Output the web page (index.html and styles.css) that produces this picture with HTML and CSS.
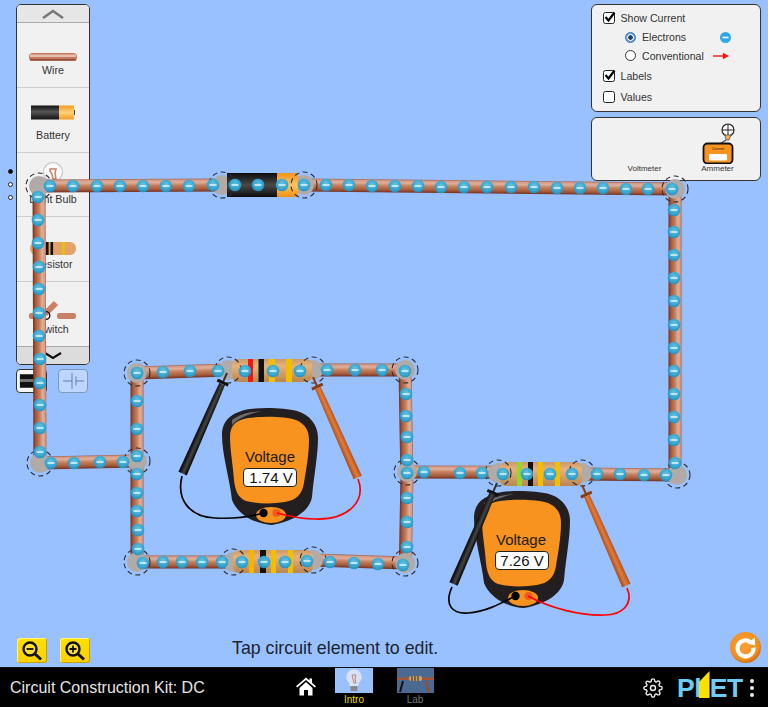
FILE: index.html
```html
<!DOCTYPE html>
<html lang="en">
<head>
<meta charset="utf-8">
<title>Circuit Construction Kit: DC</title>
<link rel="stylesheet" href="styles.css">
</head>
<body>
<div class="app">
  <main class="sim">
    <div class="sim-top">
      <div class="left">
        <div class="pager"><span class="dot on"></span><span class="dot"></span><span class="dot"></span></div>
        <section class="toolbox">
          <div class="cap cap-top"><svg width="24" height="10" viewBox="0 0 24 10"><path class="chev-up" d="M2 9 L12 2 L22 9"/></svg></div>
          <div class="tool">
            <svg class="t-wire" width="48" height="8" viewBox="0 0 48 8"><rect width="48" height="8" rx="3.5" fill="#c47a60"/><rect x="1" y="1.500" width="46" height="2.500" fill="#e8bfae"/><rect x="1" y="6" width="46" height="1.500" fill="#94503c"/></svg>
            <span>Wire</span>
          </div>
          <div class="tool">
            <svg class="t-batt" width="44" height="15" viewBox="0 0 44 15"><defs><linearGradient id="tb" x1="0" y1="0" x2="0" y2="1"><stop offset="0" stop-color="#111"/><stop offset=".45" stop-color="#555"/><stop offset="1" stop-color="#111"/></linearGradient><linearGradient id="to" x1="0" y1="0" x2="0" y2="1"><stop offset="0" stop-color="#f79a1e"/><stop offset=".5" stop-color="#ffd27a"/><stop offset="1" stop-color="#f49a22"/></linearGradient></defs><rect width="28" height="14" y=".5" fill="url(#tb)"/><rect x="28" y=".5" width="15" height="14" fill="url(#to)"/><rect x="43" y="5" width="1" height="5" fill="#444"/></svg>
            <span>Battery</span>
          </div>
          <div class="tool">
            <svg class="t-bulb" width="24" height="30" viewBox="0 0 24 30"><circle cx="12" cy="10" r="9.5" fill="#fafafa" stroke="#c8c8c8" stroke-width="1.2"/><path d="M9 7 h6 l-1 4 l1 6 h-3 l-1 -5 l-2 -3z" fill="none" stroke="#c9816a" stroke-width="1.5"/><rect x="7" y="19" width="10" height="9" fill="#bbb"/></svg>
            <span>Light Bulb</span>
          </div>
          <div class="tool">
            <svg class="t-res" width="46" height="13" viewBox="0 0 46 13"><rect width="46" height="13" rx="6" fill="#e2a466"/><rect x="16" width="2.6" height="13" fill="#111"/><rect x="20.5" width="2.6" height="13" fill="#111"/><rect x="32" width="2.6" height="13" fill="#f0c000"/></svg>
            <span>Resistor</span>
          </div>
          <div class="tool">
            <svg class="t-sw" width="48" height="21" viewBox="0 0 48 21"><rect y="13" width="14" height="6" rx="2" fill="#c98068"/><path d="M16 14 L27 3" stroke="#c98068" stroke-width="6"/><circle cx="17" cy="15.5" r="3.8" fill="none" stroke="#111" stroke-width="1.3"/><rect x="28" y="13" width="19" height="6" rx="2.5" fill="#c98068"/></svg>
            <span>Switch</span>
          </div>
          <div class="cap cap-bottom"><svg width="18" height="9" viewBox="0 0 18 9"><path class="chev-down" d="M1 2 L9 7 L17 2"/></svg></div>
        </section>
        <div class="modes">
          <div class="mode mode-life"><svg width="30" height="22" viewBox="0 0 30 22"><rect x="3" y="4" width="26" height="14" fill="#111"/><rect x="3" y="9" width="26" height="3" fill="#777"/></svg></div>
          <div class="mode mode-schem"><svg width="28" height="22" viewBox="0 0 28 22"><path class="schem" d="M4 11 H13 M13 3 V19 M17 6.500 V15.500 M17 11 H25"/></svg></div>
        </div>
      </div>
      <aside class="right">
        <section class="panel panel-opts">
          <label class="row"><span class="check"><svg width="13" height="13" viewBox="0 0 13 13"><path class="tick" d="M2.500 6 L5.500 9.500 L11.500 1.500"/></svg></span>Show Current</label>
          <div class="row sub r2"><span class="radio on"></span>Electrons<svg class="key" width="11" height="11" viewBox="0 0 11 11"><circle cx="5.500" cy="5.500" r="5.500" fill="#2ea9e6"/><rect x="2.500" y="4.700" width="6" height="1.600" fill="#fff"/></svg></div>
          <div class="row sub r3"><span class="radio"></span>Conventional<svg class="key key-arrow" width="16" height="8" viewBox="0 0 16 8"><path d="M0 4 H10" stroke="#f11" stroke-width="1.400"/><path d="M10 .8 L16 4 L10 7.200z" fill="#f11"/></svg></div>
          <label class="row r4"><span class="check"><svg width="13" height="13" viewBox="0 0 13 13"><path class="tick" d="M2.500 6 L5.500 9.500 L11.500 1.500"/></svg></span>Labels</label>
          <label class="row r5"><span class="check"></span>Values</label>
        </section>
        <section class="panel panel-meters">
          <div class="meter-item">Voltmeter</div>
          <div class="meter-item">
            <svg width="50" height="41" viewBox="0 0 50 41"><circle cx="35" cy="7" r="6" fill="#fff" stroke="#222" stroke-width="1.200"/><path d="M35 1 V13 M29 7 H41" stroke="#222" stroke-width="1"/><path d="M32 12 L38 12 L36 17 L33 17z" fill="#f4ae55" stroke="#333" stroke-width=".6"/><path d="M33 17 L27 21" stroke="#555" stroke-width="1.500"/><rect x="10.500" y="20.500" width="29" height="20" rx="4" fill="#f7931e" stroke="#111" stroke-width="1.800"/><text class="amm-t" x="25" y="27">Current</text><rect x="16" y="31" width="18" height="6.500" rx="1" fill="#fff"/></svg>
            Ammeter
          </div>
        </section>
      </aside>
    </div>
    <div class="sim-bottom">
      <button class="zoom-btn"><svg width="28" height="23" viewBox="0 0 28 23"><circle cx="12" cy="10" r="6.500" class="lens"/><path class="lens-h" d="M17 15 L23 20.500"/><path class="lens-m" d="M8.500 10 H15.500"/></svg></button>
      <button class="zoom-btn"><svg width="28" height="23" viewBox="0 0 28 23"><circle cx="12" cy="10" r="6.500" class="lens"/><path class="lens-h" d="M17 15 L23 20.500"/><path class="lens-m" d="M8.500 10 H15.500 M12 6.500 V13.500"/></svg></button>
      <p class="status">Tap circuit element to edit.</p>
      <div class="reset"><svg width="31" height="31" viewBox="0 0 31 31"><defs><radialGradient id="rg" cx=".45" cy=".4" r=".6"><stop offset="0" stop-color="#fba136"/><stop offset=".8" stop-color="#f58d1e"/><stop offset="1" stop-color="#c96f12"/></radialGradient></defs><circle cx="15.500" cy="15.500" r="15.500" fill="url(#rg)"/><path d="M21 10.500 A8 8 0 1 0 23.500 15.500" fill="none" stroke="#fff" stroke-width="4"/><path d="M17.500 11.500 L25 13.500 L25 5.500z" fill="#fff"/></svg></div>
    </div>

    <svg class="circuit" width="768" height="667" viewBox="0 0 768 667">
      <defs>
        <linearGradient id="copper" x1="0" y1="0" x2="0" y2="1">
          <stop offset="0" stop-color="#a06050"/><stop offset=".1" stop-color="#d59c88"/><stop offset=".28" stop-color="#e0ae98"/><stop offset=".5" stop-color="#c67f5c"/><stop offset=".8" stop-color="#a55b3b"/><stop offset="1" stop-color="#723024"/>
        </linearGradient>
        <linearGradient id="tan" x1="0" y1="0" x2="0" y2="1">
          <stop offset="0" stop-color="#c99a6a"/><stop offset=".3" stop-color="#e8b27a"/><stop offset="1" stop-color="#b98752"/>
        </linearGradient>
        <linearGradient id="bk" x1="0" y1="0" x2="0" y2="1">
          <stop offset="0" stop-color="#0c0c0c"/><stop offset=".5" stop-color="#4a4a4a"/><stop offset="1" stop-color="#0c0c0c"/>
        </linearGradient>
        <linearGradient id="og" x1="0" y1="0" x2="0" y2="1">
          <stop offset="0" stop-color="#f49317"/><stop offset=".5" stop-color="#ffc561"/><stop offset="1" stop-color="#f09014"/>
        </linearGradient>
        <linearGradient id="pb" x1="0" y1="0" x2="0" y2="1">
          <stop offset="0" stop-color="#000"/><stop offset=".45" stop-color="#444"/><stop offset="1" stop-color="#000"/>
        </linearGradient>
        <linearGradient id="pr" x1="0" y1="0" x2="0" y2="1">
          <stop offset="0" stop-color="#b0501c"/><stop offset=".5" stop-color="#e07c3a"/><stop offset="1" stop-color="#a84a18"/>
        </linearGradient>
        <radialGradient id="el" cx=".5" cy=".4" r=".6">
          <stop offset="0" stop-color="#64c4e4"/><stop offset=".7" stop-color="#2fa6d4"/><stop offset="1" stop-color="#1e8fc0"/>
        </radialGradient>
        <g id="e"><circle r="6.300" fill="url(#el)" opacity=".95"/><rect x="-3.500" y="-.8" width="7" height="1.600" fill="#d8f2fb"/></g>
        <g id="probe-b"><rect y="-1" width="11" height="2" fill="#333"/><rect x="9" y="-6" width="3" height="12" fill="#111"/><path d="M12 -3 L30 -3.500 L110 -4.500 V4.500 L30 3.500 L12 3z" fill="url(#pb)"/></g>
        <g id="probe-r"><rect y="-1" width="11" height="2" fill="#8a3d12"/><rect x="9" y="-6" width="3" height="12" fill="#8a3d12"/><path d="M12 -3 L30 -3.500 L110 -4.500 V4.500 L30 3.500 L12 3z" fill="url(#pr)"/></g>
        <g id="meter">
          <path d="M222 435 C222 420 232 412 250 409 C265 407 285 408 297 411 C310 415 318 425 318 438 C318 455 314 475 312 497 C310 510 295 521 272 525 C255 524 238 515 232 500 C230 480 222 455 222 435Z" fill="#231f20"/>
          <path d="M232 420 C240 414 250 412 262 411 C250 414 240 417 232 425Z" fill="#6b6b6b"/>
          <path d="M230 437 C230 425 236 420 248 418 C262 416 285 416 296 420 C305 424 309 430 309 440 C309 455 306 470 304 483 C302 495 296 500 285 502 C272 504 258 504 246 501 C238 498 235 490 234 480 C233 465 230 450 230 437Z" fill="#f7931e"/>
          <ellipse cx="271" cy="515" rx="15" ry="8" fill="#f7931e"/>
          <circle cx="263.500" cy="513" r="4.200" fill="#000"/>
          <circle cx="276.500" cy="513" r="4" fill="#f15a22"/>
          <rect x="243.500" y="468.500" width="53" height="18" rx="3.500" fill="#fff" stroke="#222" stroke-width="1"/>
        </g>
      </defs>

      <g fill="url(#copper)">
        <rect transform="translate(39 186) rotate(-.3)" y="-6.500" width="183" height="13"/>
        <rect transform="translate(304 185) rotate(.62)" y="-6.500" width="371" height="13"/>
        <rect transform="translate(675 189) rotate(90)" y="-6.500" width="286" height="13"/>
        <rect transform="translate(582 474) rotate(.6)" y="-6.500" width="95" height="13"/>
        <rect transform="translate(407 472) rotate(.1)" y="-6.500" width="91" height="13"/>
        <rect transform="translate(405 370) rotate(89)" y="-6.500" width="102" height="13"/>
        <rect transform="translate(407 472) rotate(91)" y="-6.500" width="91" height="13"/>
        <rect transform="translate(313 370)" y="-6.500" width="92" height="13"/>
        <rect transform="translate(137 373) rotate(-1.900)" y="-6.500" width="91" height="13"/>
        <rect transform="translate(137 373) rotate(90)" y="-6.500" width="88" height="13"/>
        <rect transform="translate(137 461) rotate(90)" y="-6.500" width="101" height="13"/>
        <rect transform="translate(137 562)" y="-6.500" width="96" height="13"/>
        <rect transform="translate(313 560) rotate(1.900)" y="-6.500" width="92" height="13"/>
        <rect transform="translate(40 463) rotate(-1.200)" y="-6.500" width="97" height="13"/>
        <rect transform="translate(39 186) rotate(89.800)" y="-6.500" width="277" height="13"/>
      </g>

      <!-- vertices -->
      <g class="nodes">
        <circle cx="39" cy="186" r="10"/><circle cx="222" cy="185" r="10"/><circle cx="304" cy="185" r="10"/><circle cx="675" cy="189" r="10"/>
        <circle cx="677" cy="475" r="10"/><circle cx="582" cy="473" r="10"/><circle cx="498" cy="473" r="10"/><circle cx="407" cy="472" r="10"/>
        <circle cx="405" cy="370" r="10"/><circle cx="313" cy="370" r="10"/><circle cx="228" cy="370" r="10"/><circle cx="137" cy="373" r="10"/>
        <circle cx="137" cy="461" r="10"/><circle cx="40" cy="463" r="10"/><circle cx="137" cy="562" r="10"/><circle cx="233" cy="562" r="10"/>
        <circle cx="313" cy="560" r="10"/><circle cx="405" cy="563" r="10"/>
      </g>

      <!-- battery -->
      <rect x="227" y="173" width="50" height="24" fill="url(#bk)"/>
      <rect x="277" y="173" width="21" height="24" fill="url(#og)"/>

      <!-- resistors -->
      <g>
        <rect x="232" y="359" width="80" height="23" rx="6" fill="url(#tan)"/>
        <rect x="248" y="359" width="5" height="23" fill="#f01616"/><rect x="258.500" y="359" width="5.500" height="23" fill="#111"/><rect x="269" y="359" width="6" height="23" fill="#f0c000"/><rect x="286" y="359" width="6" height="23" fill="#f0c000"/>
        <rect x="233" y="550" width="80" height="23" rx="6" fill="url(#tan)"/>
        <rect x="249" y="550" width="5" height="23" fill="#f6b400"/><rect x="260" y="550" width="6" height="23" fill="#111"/><rect x="271" y="550" width="5" height="23" fill="#f0c000"/><rect x="288" y="550" width="5" height="23" fill="#f0c000"/>
        <rect x="500" y="462" width="82" height="24" rx="6" fill="url(#tan)"/>
        <rect x="517" y="462" width="5" height="24" fill="#94d82a"/><rect x="528" y="462" width="5" height="24" fill="#111"/><rect x="538" y="462" width="5" height="24" fill="#f0c000"/><rect x="555" y="462" width="5" height="24" fill="#f0c000"/>
      </g>

      <g class="rings">
        <circle cx="39" cy="186" r="13"/><circle cx="222" cy="185" r="13"/><circle cx="304" cy="185" r="13"/><circle cx="675" cy="189" r="13"/>
        <circle cx="677" cy="475" r="13"/><circle cx="582" cy="473" r="13"/><circle cx="498" cy="473" r="13"/><circle cx="407" cy="472" r="13"/>
        <circle cx="405" cy="370" r="13"/><circle cx="313" cy="370" r="13"/><circle cx="228" cy="370" r="13"/><circle cx="137" cy="373" r="13"/>
        <circle cx="137" cy="461" r="13"/><circle cx="40" cy="463" r="13"/><circle cx="137" cy="562" r="13"/><circle cx="233" cy="562" r="13"/>
        <circle cx="313" cy="560" r="13"/><circle cx="405" cy="563" r="13"/>
      </g>

      <!-- electrons -->
      <g>
        <use href="#e" x="50" y="186"/><use href="#e" x="73" y="186"/><use href="#e" x="97" y="186"/><use href="#e" x="120" y="186"/><use href="#e" x="143" y="186"/><use href="#e" x="166" y="186"/><use href="#e" x="189" y="186"/><use href="#e" x="213" y="185"/><use href="#e" x="235" y="185"/><use href="#e" x="258" y="185"/><use href="#e" x="282" y="185"/><use href="#e" x="304" y="185"/><use href="#e" x="326" y="185"/><use href="#e" x="349" y="185"/><use href="#e" x="372" y="186"/><use href="#e" x="395" y="186"/><use href="#e" x="418" y="186"/><use href="#e" x="441" y="187"/><use href="#e" x="464" y="187"/><use href="#e" x="487" y="187"/><use href="#e" x="511" y="187"/><use href="#e" x="534" y="187"/><use href="#e" x="557" y="188"/><use href="#e" x="580" y="188"/><use href="#e" x="603" y="188"/><use href="#e" x="626" y="189"/><use href="#e" x="648" y="189"/><use href="#e" x="672" y="189"/>

        <use href="#e" x="674" y="210"/><use href="#e" x="674" y="232"/><use href="#e" x="674" y="255"/><use href="#e" x="674" y="278"/><use href="#e" x="674" y="301"/><use href="#e" x="674" y="325"/><use href="#e" x="674" y="348"/><use href="#e" x="674" y="371"/><use href="#e" x="674" y="394"/><use href="#e" x="674" y="417"/><use href="#e" x="674" y="440"/><use href="#e" x="675" y="463"/>

        <use href="#e" x="38" y="197"/><use href="#e" x="38" y="220"/><use href="#e" x="38" y="243"/><use href="#e" x="39" y="267"/><use href="#e" x="39" y="289"/><use href="#e" x="39" y="313"/><use href="#e" x="39" y="336"/><use href="#e" x="40" y="359"/><use href="#e" x="40" y="383"/><use href="#e" x="40" y="405"/><use href="#e" x="40" y="428"/><use href="#e" x="40" y="452"/>
        <use href="#e" x="51" y="463"/><use href="#e" x="74" y="463"/><use href="#e" x="100" y="462"/><use href="#e" x="123" y="462"/>

        <use href="#e" x="137" y="373"/><use href="#e" x="163" y="372"/><use href="#e" x="190" y="371"/><use href="#e" x="218" y="371"/><use href="#e" x="245" y="371"/><use href="#e" x="273" y="371"/><use href="#e" x="300" y="371"/><use href="#e" x="327" y="370"/><use href="#e" x="355" y="370"/><use href="#e" x="382" y="370"/><use href="#e" x="405" y="371"/>
        <use href="#e" x="406" y="394"/><use href="#e" x="406" y="416"/><use href="#e" x="407" y="437"/><use href="#e" x="407" y="460"/><use href="#e" x="407" y="473"/><use href="#e" x="407" y="498"/><use href="#e" x="407" y="522"/><use href="#e" x="407" y="547"/><use href="#e" x="403" y="565"/>
        <use href="#e" x="378" y="564"/><use href="#e" x="354" y="563"/><use href="#e" x="330" y="562"/><use href="#e" x="307" y="561"/><use href="#e" x="285" y="562"/><use href="#e" x="264" y="562"/><use href="#e" x="242" y="562"/><use href="#e" x="222" y="562"/><use href="#e" x="202" y="562"/><use href="#e" x="182" y="562"/><use href="#e" x="163" y="562"/><use href="#e" x="143" y="563"/>
        <use href="#e" x="138" y="549"/><use href="#e" x="138" y="530"/><use href="#e" x="137" y="511"/><use href="#e" x="137" y="493"/><use href="#e" x="137" y="474"/><use href="#e" x="137" y="456"/><use href="#e" x="137" y="429"/><use href="#e" x="137" y="401"/>

        <use href="#e" x="424" y="472"/><use href="#e" x="460" y="473"/><use href="#e" x="482" y="473"/><use href="#e" x="503" y="474"/><use href="#e" x="527" y="474"/><use href="#e" x="550" y="474"/><use href="#e" x="572" y="474"/><use href="#e" x="597" y="474"/><use href="#e" x="620" y="474"/><use href="#e" x="644" y="475"/><use href="#e" x="666" y="475"/>
      </g>

      <!-- voltmeter 1 -->
      <use href="#meter"/>
      <text class="v-label" x="270" y="462">Voltage</text>
      <text class="v-read" x="271" y="483">1.74 V</text>
      <path class="lead-k" d="M182 476 C176 500 190 517 215 518 C235 519 250 517 263 513"/>
      <path class="lead-r" d="M358 479 C366 500 350 520 315 519 C300 519 288 516 277 513"/>
      <use href="#probe-b" transform="translate(227 373) rotate(113.800)"/>
      <use href="#probe-r" transform="translate(313 377) rotate(66)"/>

      <!-- voltmeter 2 -->
      <use href="#meter" transform="translate(252 83)"/>
      <text class="v-label" x="521" y="545">Voltage</text>
      <text class="v-read" x="522" y="566">7.26 V</text>
      <path class="lead-k" d="M452 587 C444 605 452 614 468 613 C485 612 500 604 515 596"/>
      <path class="lead-r" d="M627 588 C634 604 622 615 605 615 C580 616 550 608 528 596"/>
      <use href="#probe-b" transform="translate(497 483) rotate(113.300)"/>
      <use href="#probe-r" transform="translate(582 485) rotate(66.200)"/>
    </svg>
  </main>

  <nav class="nav">
    <div class="nav-title">Circuit Construction Kit: DC</div>
    <svg class="home" width="20" height="19" viewBox="0 0 20 19"><path d="M10 .5 L13.500 3.500 V1.500 H16 V5.700 L20 9.200 L18.800 10.500 L10 3 L1.200 10.500 L0 9.200z" fill="#fff"/><path d="M3.500 11 L10 5 L16.500 11 V18.500 H12 V13 H8 V18.500 H3.500z" fill="#fff"/></svg>
    <div class="tab tab-intro">
      <div class="thumb thumb-intro"><svg width="38" height="25" viewBox="0 0 38 25"><path d="M19 2 A7 7 0 0 1 23.500 14.500 L22.500 18 H15.500 L14.500 14.500 A7 7 0 0 1 19 2z" fill="#d3e3ff" stroke="#e9e9e9" stroke-width="1"/><path d="M17 7 h4 l-1 4 l1 4 h-2 l-1 -4z" fill="none" stroke="#c9816a" stroke-width="1"/><rect x="15.500" y="18" width="7" height="5" fill="#888"/></svg></div>
      <span>Intro</span>
    </div>
    <div class="tab tab-lab">
      <div class="thumb thumb-lab"><svg width="37" height="25" viewBox="0 0 37 25"><rect y="9.500" width="37" height="2.500" fill="#a8553a"/><rect x="12" y="8" width="13" height="5" rx="2" fill="#c9a46a"/><path d="M15 8 V13 M18 8 V13 M21 8 V13" stroke="#222" stroke-width="1"/><path d="M6 13 L3 24" stroke="#111" stroke-width="2"/><path d="M29 13 L32 24" stroke="#9c4a25" stroke-width="2"/></svg></div>
      <span>Lab</span>
    </div>
    <svg class="gear" width="20" height="20" viewBox="0 0 24 24"><circle cx="12" cy="12" r="3"/><path d="M19.400 15a1.650 1.650 0 0 0 .33 1.820l.06.06a2 2 0 0 1 0 2.830 2 2 0 0 1-2.830 0l-.06-.06a1.650 1.650 0 0 0-1.820-.33 1.650 1.650 0 0 0-1 1.510V21a2 2 0 0 1-2 2 2 2 0 0 1-2-2v-.09A1.650 1.650 0 0 0 9 19.400a1.650 1.650 0 0 0-1.820.33l-.06.06a2 2 0 0 1-2.830 0 2 2 0 0 1 0-2.830l.06-.06a1.650 1.650 0 0 0 .33-1.820 1.650 1.650 0 0 0-1.510-1H3a2 2 0 0 1-2-2 2 2 0 0 1 2-2h.09A1.650 1.650 0 0 0 4.600 9a1.650 1.650 0 0 0-.33-1.820l-.06-.06a2 2 0 0 1 0-2.830 2 2 0 0 1 2.830 0l.06.06a1.650 1.650 0 0 0 1.820.33H9a1.650 1.650 0 0 0 1-1.510V3a2 2 0 0 1 2-2 2 2 0 0 1 2 2v.09a1.650 1.650 0 0 0 1 1.510 1.650 1.650 0 0 0 1.820-.33l.06-.06a2 2 0 0 1 2.830 0 2 2 0 0 1 0 2.830l-.06.06a1.650 1.650 0 0 0-.33 1.820V9a1.650 1.650 0 0 0 1.510 1H21a2 2 0 0 1 2 2 2 2 0 0 1-2 2h-.09a1.650 1.650 0 0 0-1.510 1z"/></svg>
    <div class="logo">PhET<svg class="flame" width="11" height="27" viewBox="0 0 11 27"><path d="M0 27 V11 L10.500 0 V27z" fill="#ffe000"/></svg></div>
    <div class="kebab"><i></i><i></i><i></i></div>
  </nav>
</div>
</body>
</html>
```

FILE: styles.css
```css
* { box-sizing: border-box; }
html, body { margin: 0; padding: 0; overflow: hidden; }
body { font-family: "Liberation Sans", Arial, sans-serif; color: #333; }

.app { width: 768px; height: 707px; display: flex; flex-direction: column; }

.sim {
  position: relative;
  flex: 1;
  background: #99c1ff;
  padding: 4px 7px 4px 7px;
  display: flex;
  flex-direction: column;
}
.sim-top { display: flex; justify-content: space-between; align-items: flex-start; }

.left { display: grid; grid-template-columns: 6px 74px; column-gap: 3px; row-gap: 4px; }
.pager { grid-column: 1; grid-row: 1; align-self: center; display: flex; flex-direction: column; gap: 8px; }
.dot { width: 5px; height: 5px; margin-left: .5px; border-radius: 50%; background: #fff; border: 1px solid #222; }
.dot.on { background: #000; }

.toolbox {
  grid-column: 2; grid-row: 1;
  height: 361px;
  background: #f1f1f1;
  border: 1.5px solid #333;
  border-radius: 5px;
  display: flex;
  flex-direction: column;
  overflow: hidden;
}
.cap { display: flex; align-items: center; justify-content: center; background: #e6e6e6; }
.cap-top { height: 18px; border-bottom: 1px solid #aaa; }
.cap-bottom { height: 18px; background: #dcdcdc; border-top: 1px solid #aaa; }
.chev-up { fill: none; stroke: #777; stroke-width: 2.5; }
.chev-down { fill: none; stroke: #111; stroke-width: 2.2; }
.tool {
  flex: 1;
  display: flex;
  flex-direction: column;
  align-items: center;
  justify-content: flex-end;
  padding-bottom: 10px;
  border-bottom: 1px solid #ccc;
  font-size: 10.7px;
  line-height: 14px;
  color: #333;
}
.tool:nth-last-child(2) { border-bottom: 0; }
.t-wire { margin-bottom: 2px; }
.t-batt { margin-bottom: 8px; }
.t-bulb { margin-bottom: 0; }
.t-res { margin-bottom: 2px; }
.t-sw { margin-bottom: 1px; }

.modes { grid-column: 2; grid-row: 2; display: flex; gap: 11px; }
.mode { width: 31px; height: 24px; border-radius: 4px; display: flex; align-items: center; justify-content: center; }
.mode-life { background: #f6f6f6; border: 1.5px solid #333; }
.mode-schem { background: #bcd6ff; border: 1.5px solid #7f97bd; width: 30px; }
.schem { fill: none; stroke: #6b7f9e; stroke-width: 1; }

.right { width: 170px; display: flex; flex-direction: column; gap: 5px; }
.panel { background: #f1f1f1; border: 1.5px solid #333; border-radius: 6px; }
.panel-opts { height: 108px; padding: 5.5px 29px 0 10.5px; font-size: 10.6px; color: #333; }
.row { display: flex; align-items: center; height: 14px; line-height: 14px; }
.sub { padding-left: 22.5px; }
.r2 { margin-top: 5.5px; }
.r3 { margin-top: 4.5px; }
.r4 { margin-top: 6px; }
.r5 { margin-top: 7.5px; }
.check { width: 12px; height: 12px; margin-right: 6px; background: #fff; border: 1.3px solid #222; border-radius: 2.5px; position: relative; flex: none; }
.check svg { position: absolute; left: -1px; top: -2px; }
.tick { fill: none; stroke: #000; stroke-width: 2.2; }
.radio { width: 11px; height: 11px; margin-right: 6px; flex: none; border-radius: 50%; background: #fff; border: 1.2px solid #333; }
.radio.on { background: radial-gradient(circle, #1c3d66 0 2px, #fff 2.5px 3px, #6aa6ea 3.5px); border-color: #3b6fb0; }
.key { margin-left: auto; flex: none; }
.key-arrow { margin-right: 2.5px; }

.panel-meters { height: 64px; display: flex; align-items: flex-end; gap: 23px; padding: 0 0 7px 27.5px; font-size: 8px; color: #333; }
.meter-item { width: 50px; text-align: center; line-height: 9px; }
.meter-item svg { display: block; }
.amm-t { font-size: 3.6px; text-anchor: middle; fill: #222; }

.sim-bottom { margin-top: auto; height: 31px; display: flex; align-items: flex-end; padding-left: 10px; }
.zoom-btn {
  width: 30px; height: 25px; padding: 0;
  display: flex; align-items: center; justify-content: center;
  border: 0; border-radius: 3px;
  background: linear-gradient(#ffe100, #ffd000);
  box-shadow: inset -1px -1px 0 #c9a200, inset 1px 1px 0 #fff27a;
}
.zoom-btn + .zoom-btn { margin-left: 13px; }
.lens { fill: #fff3; stroke: #111; stroke-width: 2.4; }
.lens-h { fill: none; stroke: #111; stroke-width: 3; }
.lens-m { fill: none; stroke: #111; stroke-width: 1.8; }
.status { margin: 0 0 5px 142px; font-size: 17.75px; line-height: 20px; color: #1c2430; white-space: nowrap; }
.reset { margin-left: auto; width: 31px; height: 31px; }
.reset svg { display: block; }

.circuit { position: absolute; left: 0; top: 0; pointer-events: none; }
.nodes circle { fill: #b2aaa6; }
.rings circle { fill: none; stroke: #2b2b33; stroke-width: 1.1; stroke-dasharray: 5 3.500; }
.v-label { font-size: 15px; text-anchor: middle; fill: #1d1a14; }
.v-read { font-size: 15px; text-anchor: middle; fill: #111; }
.lead-k { fill: none; stroke: #000; stroke-width: 1.700; }
.lead-r { fill: none; stroke: #f00; stroke-width: 1.700; }

.nav { height: 40px; background: #000; display: flex; align-items: center; border-top: 1px solid #111; }
.nav-title { width: 296px; padding-left: 10px; font-size: 16px; color: #e4e4e4; white-space: nowrap; }
.home { flex: none; margin-bottom: 2px; }
.tab { align-self: flex-start; width: 38px; display: flex; flex-direction: column; align-items: center; font-size: 10px; line-height: 14px; }
.tab-intro { margin-left: 19px; color: #e8d900; }
.tab-lab { margin-left: 23px; color: #777; }
.thumb { height: 25px; }
.thumb svg { display: block; }
.thumb-intro { width: 38px; background: #99c1ff; }
.thumb-lab { width: 37px; background: #4b6a92; }
.gear { margin-left: auto; flex: none; fill: none; stroke: #eee; stroke-width: 1.700; }
.logo { position: relative; margin-left: 14px; width: 65px; font-size: 26.5px; font-weight: 700; line-height: 28px; letter-spacing: -.5px; color: #6ccdf4; }
.flame { position: absolute; left: 22px; top: -3px; }
.kebab { margin: 0 14px 0 8px; display: flex; flex-direction: column; gap: 3px; }
.kebab i { display: block; width: 4px; height: 4px; border-radius: 50%; background: #eee; }
```
